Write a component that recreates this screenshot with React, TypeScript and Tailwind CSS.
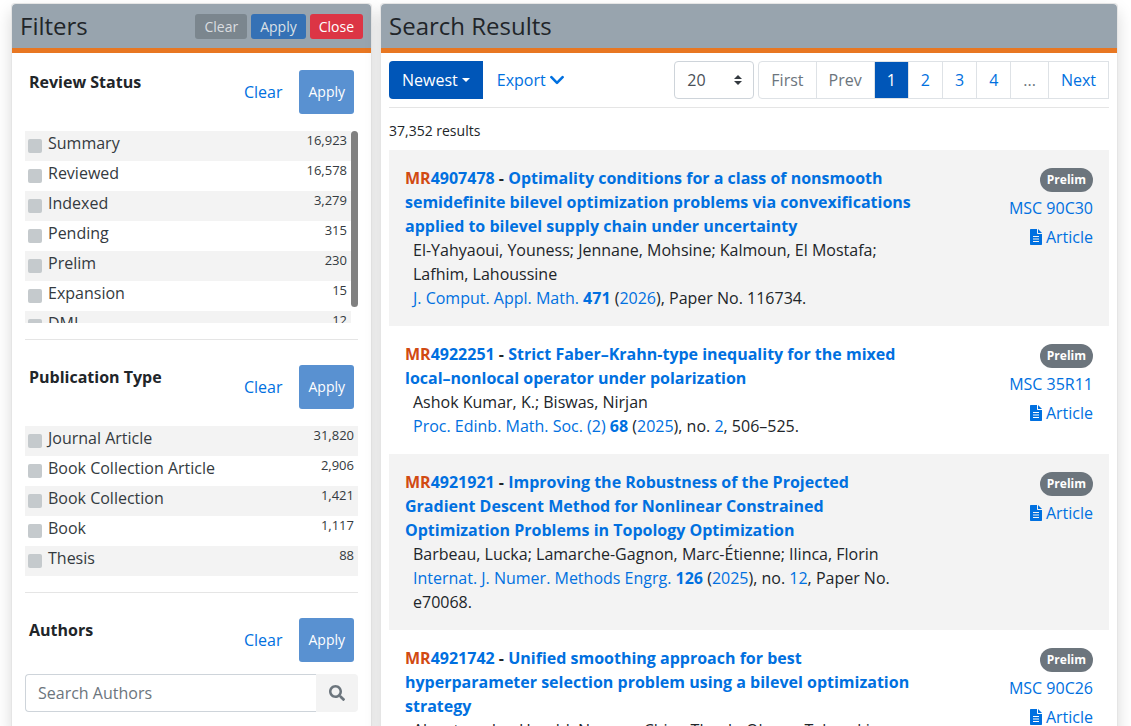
import type { ReactNode } from "react";
import { FaSearch } from "react-icons/fa";

type Option = { label: string; count: string };

const reviewStatus: Option[] = [
  { label: "Summary", count: "16,923" },
  { label: "Reviewed", count: "16,578" },
  { label: "Indexed", count: "3,279" },
  { label: "Pending", count: "315" },
  { label: "Prelim", count: "230" },
  { label: "Expansion", count: "15" },
  { label: "DML", count: "12" },
];

const publicationTypes: Option[] = [
  { label: "Journal Article", count: "31,820" },
  { label: "Book Collection Article", count: "2,906" },
  { label: "Book Collection", count: "1,421" },
  { label: "Book", count: "1,117" },
  { label: "Thesis", count: "88" },
];

type Result = {
  id: string;
  title: string;
  authors: string;
  source: ReactNode;
  msc: string;
};

function TextLink({ children }: { children: ReactNode }) {
  return (
    <a href="#" className="text-[#0070e0]">
      {children}
    </a>
  );
}

const results: Result[] = [
  {
    id: "4907478",
    title:
      "Optimality conditions for a class of nonsmooth semidefinite bilevel optimization problems via convexifications applied to bilevel supply chain under uncertainty",
    authors: "El-Yahyaoui, Youness; Jennane, Mohsine; Kalmoun, El Mostafa; Lafhim, Lahoussine",
    source: (
      <>
        <TextLink>J. Comput. Appl. Math.</TextLink>{" "}
        <TextLink>
          <b>471</b>
        </TextLink>{" "}
        (<TextLink>2026</TextLink>), Paper No. 116734.
      </>
    ),
    msc: "90C30",
  },
  {
    id: "4922251",
    title:
      "Strict Faber–Krahn-type inequality for the mixed local–nonlocal operator under polarization",
    authors: "Ashok Kumar, K.; Biswas, Nirjan",
    source: (
      <>
        <TextLink>Proc. Edinb. Math. Soc. (2)</TextLink>{" "}
        <TextLink>
          <b>68</b>
        </TextLink>{" "}
        (<TextLink>2025</TextLink>), no. <TextLink>2</TextLink>, 506–525.
      </>
    ),
    msc: "35R11",
  },
  {
    id: "4921921",
    title:
      "Improving the Robustness of the Projected Gradient Descent Method for Nonlinear Constrained Optimization Problems in Topology Optimization",
    authors: "Barbeau, Lucka; Lamarche-Gagnon, Marc-Étienne; Ilinca, Florin",
    source: (
      <>
        <TextLink>Internat. J. Numer. Methods Engrg.</TextLink>{" "}
        <TextLink>
          <b>126</b>
        </TextLink>{" "}
        (<TextLink>2025</TextLink>), no. <TextLink>12</TextLink>, Paper No. e70068.
      </>
    ),
    msc: "",
  },
  {
    id: "4921742",
    title:
      "Unified smoothing approach for best hyperparameter selection problem using a bilevel optimization strategy",
    authors: "Alcantara, Jan Harold; Nguyen, Chieu Thanh; Okuno, Takayuki; Takeda, Akiko; Chen, Jein-Shan",
    source: (
      <>
        <TextLink>Math. Program.</TextLink>{" "}
        <TextLink>
          <b>212</b>
        </TextLink>{" "}
        (<TextLink>2025</TextLink>), no. <TextLink>1-2</TextLink>, 479–518.
      </>
    ),
    msc: "90C26",
  },
];

function Panel({ title, actions, children }: { title: string; actions?: ReactNode; children: ReactNode }) {
  return (
    <section className="min-w-0 rounded border border-black/10 bg-white shadow-[0_8px_16px_rgba(0,0,0,0.15)]">
      <header className="flex h-[49px] items-center justify-between rounded-t border-b-[5px] border-[#e87722] bg-[#98a4ae] px-2">
        <h1 className="text-2xl">{title}</h1>
        {actions}
      </header>
      {children}
    </section>
  );
}

function FilterHeading({ title }: { title: string }) {
  return (
    <div className="flex h-11 items-center px-1">
      <h2 className="flex-1 self-start font-bold">{title}</h2>
      <a href="#" className="mr-[17px] text-[#0070e0]">
        Clear
      </a>
      <button type="button" className="h-11 rounded-[3px] bg-[#5991d1] px-[9px] text-sm font-medium text-white">
        Apply
      </button>
    </div>
  );
}

function OptionList({ options }: { options: Option[] }) {
  return (
    <ul className="text-[#343a40]">
      {options.map((option) => (
        <li key={option.label} className="h-[30px] odd:bg-[#f3f3f3]">
          <label className="flex h-full items-start pr-1 pl-[3px]">
            <input type="checkbox" className="mt-2 size-3.5 appearance-none rounded-xs bg-[#c5cacd] checked:bg-[#0056b8]" />
            <span className="ml-1.5 flex-1">{option.label}</span>
            <span className="text-[13px] leading-[18px]">{option.count}</span>
          </label>
        </li>
      ))}
    </ul>
  );
}

function Filters() {
  return (
    <Panel
      title="Filters"
      actions={
        <div className="flex gap-1 text-sm leading-[25px]">
          <button type="button" className="rounded-[3px] bg-[#7b868e] px-[9px] text-[#dadde0]">
            Clear
          </button>
          <button type="button" className="rounded-[3px] bg-[#3571b5] px-[9px] text-[#dbe0e5]">
            Apply
          </button>
          <button type="button" className="rounded-[3px] bg-[#dc3545] px-[9px] text-white">
            Close
          </button>
        </div>
      }
    >
      <div className="px-[13px] pt-[17px] pb-4">
        <FilterHeading title="Review Status" />
        <div className="mt-[17px] flex h-48">
          <div className="flex-1 overflow-y-auto [scrollbar-width:none]">
            <OptionList options={reviewStatus} />
          </div>
          <div className="h-44 w-[7px] rounded-full bg-[#808080]" />
        </div>
        <hr className="mt-4 mb-[25px] border-[#e5e5e5]" />
        <FilterHeading title="Publication Type" />
        <div className="mt-[17px]">
          <OptionList options={publicationTypes} />
        </div>
        <hr className="mt-4 mb-[25px] border-[#e5e5e5]" />
        <FilterHeading title="Authors" />
        <div className="mt-3 flex h-[38px]">
          <input
            type="text"
            aria-label="Search Authors"
            placeholder="Search Authors"
            className="min-w-0 flex-1 rounded-l border border-r-0 border-[#ced4da] px-3 placeholder:text-[#6c757d]"
          />
          <button
            type="button"
            aria-label="Search"
            className="flex w-[42px] items-center justify-center rounded-r bg-[#f3f3f3] text-[#6c757d]"
          >
            <FaSearch />
          </button>
        </div>
      </div>
    </Panel>
  );
}

const pages = [
  { label: "First", style: "rounded-l text-[#6c757d]" },
  { label: "Prev", style: "text-[#6c757d]" },
  { label: "1", style: "border-[#0056b8] bg-[#0056b8] text-white" },
  { label: "2", style: "text-[#0070e0]" },
  { label: "3", style: "text-[#0070e0]" },
  { label: "4", style: "text-[#0070e0]" },
  { label: "...", style: "text-[#6c757d]" },
  { label: "Next", style: "text-[#0070e0]" },
];

function Toolbar() {
  return (
    <div className="flex items-center border-b border-[#e5e5e5] py-2">
      <button type="button" className="flex h-[38px] items-center gap-1 rounded-l bg-[#0056b8] px-[13px] font-medium text-white">
        Newest
        <svg viewBox="0 0 8 4" className="h-1 w-2 fill-current" aria-hidden="true">
          <path d="M0 0h8L4 4z" />
        </svg>
      </button>
      <button type="button" className="ml-[14px] flex items-center gap-1 text-[#0070e0]">
        Export
        <svg viewBox="0 0 14 16" className="h-4 w-3.5 fill-none stroke-current stroke-[2.6]" aria-hidden="true">
          <path d="M1.4 5.2 7 10.8l5.6-5.6" strokeLinecap="round" strokeLinejoin="round" />
        </svg>
      </button>
      <div className="relative mr-1 ml-auto">
        <select
          aria-label="Results per page"
          className="h-[38px] w-20 appearance-none rounded border border-[#ced4da] bg-white px-3 text-[#495057]"
        >
          <option>20</option>
          <option>50</option>
          <option>100</option>
        </select>
        <svg viewBox="0 0 8 10" className="pointer-events-none absolute top-3.5 right-3 h-2.5 w-2 fill-[#343a40]" aria-hidden="true">
          <path d="M4 0 0 4h8zM4 10 0 6h8z" />
        </svg>
      </div>
      <nav aria-label="Pagination" className="flex">
        {pages.map((page, index) => (
          <a
            key={page.label}
            href="#"
            className={`flex h-[38px] items-center border border-[#dee2e6] px-3 ${index > 0 ? "-ml-px" : ""} ${page.style}`}
          >
            {page.label}
          </a>
        ))}
      </nav>
    </div>
  );
}

function ResultRow({ result }: { result: Result }) {
  return (
    <article className="flex p-4 odd:bg-[#f3f3f3]">
      <div className="w-3/4 pr-2">
        <h2 className="font-bold">
          <a href="#" className="text-[#0070e0]">
            <span className="text-[#d14a12]">MR</span>
            {result.id}
          </a>{" "}
          - <TextLink>{result.title}</TextLink>
        </h2>
        <div className="pl-2">
          <p>{result.authors}</p>
          <p>{result.source}</p>
        </div>
      </div>
      <div className="flex flex-1 flex-col items-end pt-0.5">
        <span className="rounded-full bg-[#6c757d] px-[7px] text-xs leading-6 font-bold text-white">Prelim</span>
        {result.msc && (
          <a href="#" className="mt-1 text-[#0070e0]">
            MSC {result.msc}
          </a>
        )}
        <a href="#" className="mt-[5px] flex items-center gap-1 text-[#0070e0]">
          <svg viewBox="0 0 12 16" className="h-4 w-3 fill-current" aria-hidden="true">
            <path
              fillRule="evenodd"
              d="M.7 0H7v4.3q0 .7.7.7H12v10.3q0 .7-.7.7H.7q-.7 0-.7-.7V.7Q0 0 .7 0zM8 0l4 4H8zM3 7v1h6V7zM3 9.5v1h6v-1zM3 12v1h6v-1z"
            />
          </svg>
          Article
        </a>
      </div>
    </article>
  );
}

export default function App() {
  return (
    <main className="grid h-screen grid-cols-[361px_minmax(0,1fr)] items-start gap-2 overflow-hidden bg-white pt-[3px] pr-[13px] pl-[11px] font-['Open_Sans','Noto_Sans',sans-serif] text-base text-[#212529]">
      <Filters />
      <Panel title="Search Results">
        <div className="px-2">
          <Toolbar />
          <p className="pt-[13px] pb-[9px] text-sm">37,352 results</p>
          <div>
            {results.map((result) => (
              <ResultRow key={result.id} result={result} />
            ))}
          </div>
        </div>
      </Panel>
    </main>
  );
}
